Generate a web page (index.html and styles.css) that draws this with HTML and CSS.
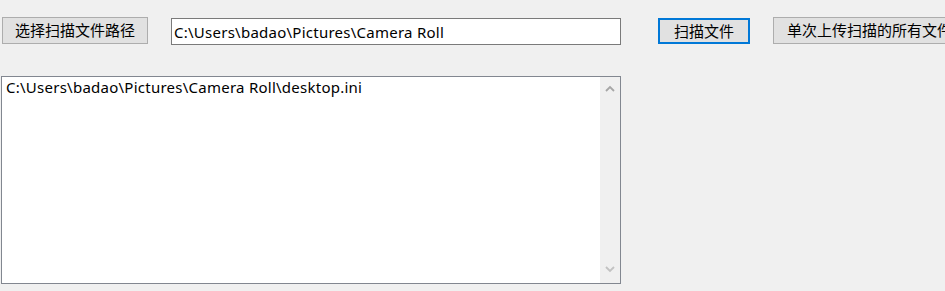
FILE: index.html
```html
<!DOCTYPE html>
<html lang="zh-CN">
<head>
<meta charset="utf-8">
<title>扫描文件</title>
<link rel="stylesheet" href="styles.css">
</head>
<body>
<div class="window">
  <div class="toolbar">
    <div class="btn btn-path">选择扫描文件路径</div>
    <div class="textbox">C:\Users\badao\Pictures\Camera Roll</div>
    <div class="btn btn-scan">扫描文件</div>
    <div class="btn btn-upload">单次上传扫描的所有文件</div>
  </div>
  <div class="listbox">
    <div class="list-content">
      <div class="list-item">C:\Users\badao\Pictures\Camera Roll\desktop.ini</div>
    </div>
    <div class="scrollbar">
      <svg class="arrow" width="10" height="7" viewBox="0 0 10 7"><path d="M1 6 L5 2 L9 6" fill="none" stroke="#a6a6a6" stroke-width="1.8"/></svg>
      <svg class="arrow" width="10" height="7" viewBox="0 0 10 7"><path d="M1 1 L5 5 L9 1" fill="none" stroke="#c2c2c2" stroke-width="1.8"/></svg>
    </div>
  </div>
</div>
</body>
</html>
```
FILE: styles.css
```css
html, body {
  margin: 0;
  padding: 0;
  background: #f0f0f0;
  overflow: hidden;
}
.window {
  width: 945px;
  height: 291px;
  font-family: "Noto Sans", "Noto Sans CJK SC", sans-serif;
  font-size: 15px;
  color: #000;
  overflow: hidden;
}
.toolbar {
  display: flex;
  align-items: flex-start;
  padding-top: 17px;
  padding-left: 2px;
  white-space: nowrap;
}
.btn {
  box-sizing: border-box;
  display: flex;
  align-items: center;
  justify-content: center;
  background: #e1e1e1;
  border: 1px solid #adadad;
  height: 27px;
  flex: none;
  line-height: 1;
}
.btn-path {
  width: 146px;
}
.textbox {
  box-sizing: border-box;
  margin-left: 23px;
  margin-top: 1px;
  width: 450px;
  height: 27px;
  background: #fff;
  border: 1px solid #7a7a7a;
  display: flex;
  align-items: center;
  padding-left: 2px;
  flex: none;
  letter-spacing: 0.25px;
}
.btn-scan {
  margin-left: 37px;
  margin-top: 1px;
  width: 92px;
  height: 26px;
  border: 2px solid #0078d7;
}
.btn-upload {
  margin-left: 23px;
  width: 193px;
}
.listbox {
  box-sizing: border-box;
  margin-top: 31px;
  margin-left: 1px;
  width: 620px;
  height: 208px;
  border: 1px solid #828790;
  background: #fff;
  display: flex;
}
.list-content {
  flex: 1;
  padding: 0 0 0 4px;
}
.list-item {
  line-height: 20px;
  letter-spacing: 0.25px;
}
.scrollbar {
  width: 20px;
  background: #f0f0f0;
  display: flex;
  flex-direction: column;
  align-items: center;
  justify-content: space-between;
  padding: 8px 0 10px;
  box-sizing: border-box;
}
.arrow {
  display: block;
}
```
